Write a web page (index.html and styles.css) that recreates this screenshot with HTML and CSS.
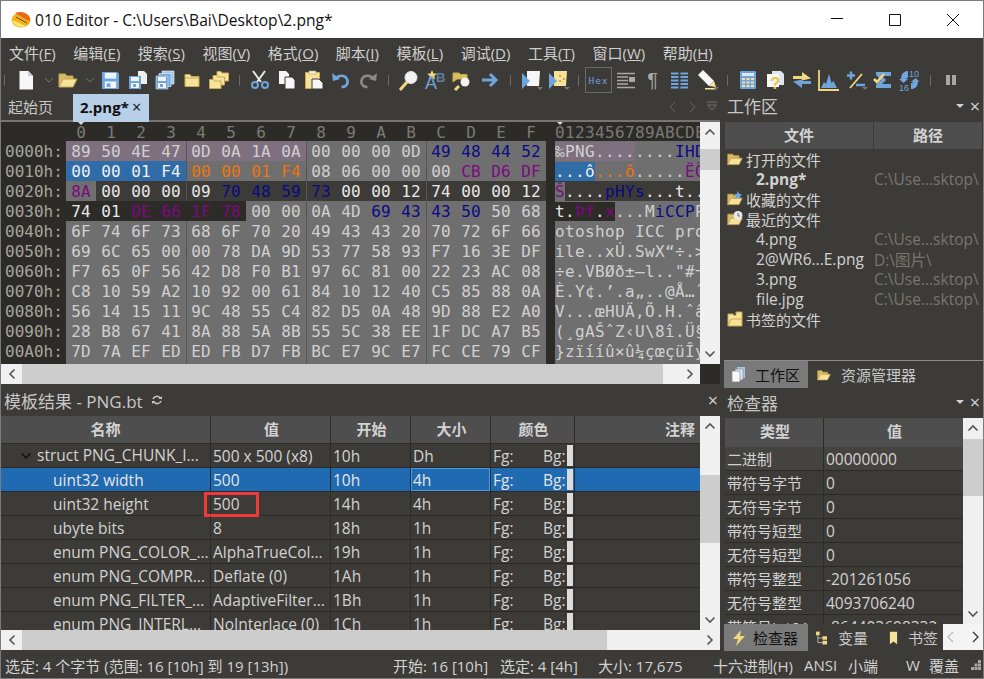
FILE: index.html
```html
<!DOCTYPE html>
<html lang="zh-CN">
<head>
    <meta charset="UTF-8">
    <meta name="viewport" content="width=device-width, initial-scale=1.0">
    <title>010 Editor</title>
    <link rel="stylesheet" href="styles.css">
</head>
<body>
<svg class="defs" width="0" height="0">
    <defs>
        <symbol id="folder-open" viewBox="0 0 20 20">
            <path d="M1 17V4h6l2 2h6v3H6z" fill="#d9bb63" stroke="#c8a850"/>
            <path d="M1 17l4-8h14l-4 8z" fill="#f7e29b" stroke="#c8a850"/>
        </symbol>
        <symbol id="floppy" viewBox="0 0 20 20">
            <path d="M1 1h16l2 2v16H1z" fill="#6fa5dc"/>
            <path d="M4 2h12v6H4z" fill="#eef4fb"/>
            <path d="M4 11h12v7H4z" fill="#f4f4f4"/>
            <path d="M6 13h4v4H6z" fill="#6fa5dc"/>
        </symbol>
    </defs>
</svg>
<div class="window">
    <div class="titlebar">
        <svg class="app-icon" width="20" height="18" viewBox="0 0 20 18">
            <ellipse cx="10" cy="9" rx="9.5" ry="7.5" fill="#f2b21e"/>
            <path d="M4 2c5-2 12-1 15 5 1 3-1 3-3 2z" fill="#e8691c"/>
            <path d="M1 9c3 1 9 4 14 6-4 2-12 1-14-6z" fill="#fbe46a"/>
            <path d="M5 6l11 6" stroke="#6b4a12" stroke-width="1"/>
        </svg>
        <span class="title-text">010 Editor - C:\Users\Bai\Desktop\2.png*</span>
        <div class="win-btns">
            <svg width="14" height="14" viewBox="0 0 14 14"><path d="M1 5.500h12" stroke="#111"/></svg>
            <svg width="14" height="14" viewBox="0 0 14 14"><path d="M1.500 1.500h11v11h-11z" fill="none" stroke="#111"/></svg>
            <svg width="14" height="14" viewBox="0 0 14 14"><path d="M1 1l12 12M13 1L1 13" stroke="#111"/></svg>
        </div>
    </div>

    <div class="menubar">
        <span>文件(<u>F</u>)</span>
        <span>编辑(<u>E</u>)</span>
        <span>搜索(<u>S</u>)</span>
        <span>视图(<u>V</u>)</span>
        <span>格式(<u>O</u>)</span>
        <span>脚本(<u>I</u>)</span>
        <span>模板(<u>L</u>)</span>
        <span>调试(<u>D</u>)</span>
        <span>工具(<u>T</u>)</span>
        <span>窗口(<u>W</u>)</span>
        <span>帮助(<u>H</u>)</span>
    </div>

    <div class="toolbar">
        <i class="tb-grip"></i>
        <span class="tb"><svg width="20" height="20" viewBox="0 0 20 20"><path d="M3.500 1h9l4.500 5v13.500h-13.500z" fill="#f7f7f7"/><path d="M12 1v5h5z" fill="#c5cfdb"/></svg></span>
        <span class="tb-chev"><svg width="10" height="6" viewBox="0 0 10 6"><path d="M1 1l4 4 4-4" fill="none" stroke="#77756f"/></svg></span>
        <span class="tb-folder"><svg width="20" height="20"><use href="#folder-open"/></svg></span>
        <span class="tb-chev chev-end"><svg width="10" height="6" viewBox="0 0 10 6"><path d="M1 1l4 4 4-4" fill="none" stroke="#77756f"/></svg></span>
        <span class="tb"><svg width="19" height="19"><use href="#floppy"/></svg></span>
        <span class="tb"><svg width="20" height="20" viewBox="0 0 20 20"><path d="M10 1h6l3 3v10h-9z" fill="#eee"/><path d="M1 6h12v13H1z" fill="#6fa5dc"/><path d="M3 7h8v4H3zM3 13h8v5H3z" fill="#f2f2f2"/><path d="M5 14h3v3H5z" fill="#6fa5dc"/></svg></span>
        <span class="tb"><svg width="20" height="20" viewBox="0 0 20 20"><path d="M7 1h12v13H7z" fill="#9cc3ea" stroke="#fff" stroke-width=".6"/><path d="M4 3.500h12v13H4z" fill="#6fa5dc" stroke="#fff" stroke-width=".6"/><path d="M1 6h12v13H1z" fill="#6fa5dc" stroke="#dbe8f5" stroke-width=".6"/><path d="M3 7h8v4H3zM3 13h8v5H3z" fill="#f2f2f2"/><path d="M5 14h3v3H5z" fill="#6fa5dc"/></svg></span>
        <span class="tb"><svg width="18" height="18" viewBox="0 0 18 18"><path d="M2 3.500h5l1.500 2h7.500v10H2z" fill="#f7e29b" stroke="#c8a850"/><path d="M2 7h14" stroke="#c8a850"/></svg></span>
        <span class="tb"><svg width="22" height="20" viewBox="0 0 22 20"><path d="M9 1.500h4l1 1.500h6.500v8H9z" fill="#f7e29b" stroke="#c8a850"/><path d="M5 5.500h4l1 1.500h6.500v8H5z" fill="#f7e29b" stroke="#c8a850"/><path d="M1.500 9.500h4l1 1.500h6.500v7.500H1.500z" fill="#f7e29b" stroke="#c8a850"/></svg></span>
        <i class="tb-sep"></i>
        <span class="tb"><svg width="20" height="20" viewBox="0 0 20 20"><path d="M3 1l8 11M15 1l-8 11" stroke="#e8e8e8" stroke-width="2"/><circle cx="5" cy="15" r="3" fill="none" stroke="#6fa5dc" stroke-width="2"/><circle cx="15" cy="15" r="3" fill="none" stroke="#6fa5dc" stroke-width="2"/></svg></span>
        <span class="tb"><svg width="20" height="20" viewBox="0 0 20 20"><path d="M2 1h7l3 3v10H2z" fill="#f7f7f7"/><path d="M8 7h7l3 3v9H8z" fill="#f7f7f7" stroke="#3d3b37"/></svg></span>
        <span class="tb"><svg width="20" height="20" viewBox="0 0 20 20"><path d="M1.500 2.500h14v16h-14z" fill="#f7e29b" stroke="#c8a850"/><path d="M5 1h7v3H5z" fill="#eee" stroke="#c8a850" stroke-width=".6"/><path d="M8 9h7l4 4v6H8z" fill="#f7f7f7" stroke="#3d3b37"/></svg></span>
        <span class="tb"><svg width="20" height="18" viewBox="0 0 20 18"><path d="M4.500 8c3-4.500 9.500-4 11.500 0 2 4.500-1 8-5.500 8" fill="none" stroke="#6fa5dc" stroke-width="2.600"/><path d="M1 2l1 8 7-2z" fill="#6fa5dc"/></svg></span>
        <span class="tb"><svg width="20" height="18" viewBox="0 0 20 18"><path d="M15.500 8c-3-4.500-9.500-4-11.500 0-2 4.500 1 8 5.500 8" fill="none" stroke="#8a8a86" stroke-width="2.600"/><path d="M19 2l-1 8-7-2z" fill="#8a8a86"/></svg></span>
        <i class="tb-sep"></i>
        <span class="tb"><svg width="21" height="21" viewBox="0 0 21 21"><path d="M9 12l-7 8" stroke="#f3d77c" stroke-width="3"/><circle cx="13" cy="7.500" r="6" fill="#f2f2f2" stroke="#e6e6e6"/></svg></span>
        <span class="tb"><svg width="22" height="20" viewBox="0 0 22 20"><path d="M7 0l1.500 3.500 3.500.300-2.700 2.300.8 3.400L7 7.700 4 9.500l.8-3.400L2.100 3.800l3.400-.3z" fill="#f3d77c"/><text x="0" y="19" class="ab-a">A</text><text x="11" y="12" class="ab-b">B</text></svg></span>
        <span class="tb"><svg width="21" height="21" viewBox="0 0 21 21"><path d="M1 12V3h6l1.500 1.500h6.500V9H5z" fill="#d9bb63" stroke="#c8a850"/><path d="M7 16l-4 4" stroke="#f3d77c" stroke-width="3"/><circle cx="13" cy="12" r="4.500" fill="#f2f2f2"/></svg></span>
        <span class="tb"><svg width="18" height="16" viewBox="0 0 18 16"><path d="M1 8h13M9 2l6 6-6 6" fill="none" stroke="#6fa5dc" stroke-width="3"/></svg></span>
        <i class="tb-sep"></i>
        <span class="tb tb-more"><svg width="20" height="20" viewBox="0 0 20 20"><path d="M6 1h13l-1 15H6z" fill="#f5f5f5"/><path d="M1 3l8 8-8 8z" fill="#6fa5dc"/></svg></span>
        <span class="tb tb-more"><svg width="20" height="20" viewBox="0 0 20 20"><path d="M6 1h13l-1 15H6z" fill="#f7e29b"/><path d="M11 5h2v2h-2zM15 8h2v2h-2zM11 10h2v2h-2z" fill="#c8a850"/><path d="M1 3l8 8-8 8z" fill="#6fa5dc"/></svg></span>
        <i class="tb-sep"></i>
        <span class="tb-hex">Hex</span>
        <span class="tb"><svg width="20" height="18" viewBox="0 0 20 18"><path d="M1 2.500h18M1 6h11M1 9.500h11M1 13h11M1 16.500h18" stroke="#a8a8a4" stroke-width="1.400"/><path d="M13 6h6v5h-6z" fill="#a8a8a4"/></svg></span>
        <span class="tb tb-pil">¶</span>
        <span class="tb"><svg width="17" height="17" viewBox="0 0 17 17"><path d="M0 1.500h7.500M9.500 1.500h7.500M0 5h7.500M9.500 5h7.500M0 8.500h7.500M9.500 8.500h7.500M0 12h7.500M9.500 12h7.500M0 15.500h7.500M9.500 15.500h7.500" stroke="#6fa5dc" stroke-width="2"/></svg></span>
        <span class="tb tb-more"><svg width="20" height="20" viewBox="0 0 20 20"><path d="M1 5l5-5 11 11-5 5z" fill="#f7f7f7"/><path d="M12 16l5-5 2 6z" fill="#f7e29b"/><path d="M8 18h11v1.500H8z" fill="#f7e29b"/></svg></span>
        <i class="tb-sep"></i>
        <span class="tb"><svg width="16" height="18" viewBox="0 0 16 18"><path d="M0 1l1-1h14l1 1v16l-1 1H1l-1-1z" fill="#6fa5dc"/><path d="M2 2h12v3H2z" fill="#dbe8f5"/><path d="M2 7h3v2H2zM6.500 7h3v2h-3zM11 7h3v2h-3zM2 10.500h3v2H2zM6.500 10.500h3v2h-3zM11 10.500h3v2h-3zM2 14h3v2H2zM6.500 14h3v2h-3zM11 14h3v2h-3z" fill="#f7e29b"/></svg></span>
        <span class="tb"><svg width="18" height="20" viewBox="0 0 18 20"><path d="M6 1h9l3 3v11H6z" fill="#dfe6ee"/><path d="M1 4h12v13H1z" fill="#f7f7f7"/><text x="4" y="19" class="help-q">?</text></svg></span>
        <span class="tb"><svg width="20" height="18" viewBox="0 0 20 18"><path d="M1 5h9V1l9 6.500-9 2V8H1z" fill="#f3d77c"/><path d="M19 13h-9v4l-9-6.500 9-2V10h9z" fill="#6fa5dc"/></svg></span>
        <span class="tb"><svg width="21" height="21" viewBox="0 0 21 21"><path d="M1 0v20h20" fill="none" stroke="#f3d77c" stroke-width="1.800"/><path d="M3 18l3-6 2 2 3-10 2.500 9 2-2 3.500 7z" fill="#6fa5dc"/></svg></span>
        <span class="tb tb-more"><svg width="18" height="18" viewBox="0 0 18 18"><path d="M0 4.500h8M4 .5v8M9 14h9" stroke="#6fa5dc" stroke-width="2.400"/><path d="M3 17L15 3" stroke="#f3d77c" stroke-width="1.800"/></svg></span>
        <span class="tb"><svg width="19" height="18" viewBox="0 0 19 18"><path d="M3 1h15v4h-9l4 4-4 4h9v4H3v-3l5-5-5-5z" fill="#6fa5dc"/><path d="M1 8l3 3 7-8" fill="none" stroke="#f3d77c" stroke-width="2.600"/></svg></span>
        <span class="tb tb-base">
            <svg width="21" height="21" viewBox="0 0 21 21"><path d="M2 9c0-6 4-8 7-8v7c-1 0-2 0-2 1h2l-4.500 4L0 9z" fill="#6fa5dc"/><path d="M19 11c0 6-3 8-7 8v-6c1 0 2 0 2-1h-2l4.500-4 4.500 4z" fill="#6fa5dc"/><text x="10" y="7" class="base-n">10</text><text x="0" y="21" class="base-n">16</text></svg>
        </span>
        <i class="tb-sep"></i>
        <span class="tb"><svg width="10" height="10" viewBox="0 0 10 10"><path d="M0 0h4v10H0zM6 0h4v10H6z" fill="#a8a8a4"/></svg></span>
    </div>

    <div class="main">
        <div class="left">
            <div class="tabs">
                <span class="tab">起始页</span>
                <span class="tab active"><b>2.png*</b><em>×</em></span>
                <div class="tab-nav">
                    <svg width="10" height="12" viewBox="0 0 10 12"><path d="M7 1L2 6l5 5" fill="none" stroke="#66645f"/></svg>
                    <svg width="10" height="12" viewBox="0 0 10 12"><path d="M3 1l5 5-5 5" fill="none" stroke="#66645f"/></svg>
                    <svg width="12" height="12" viewBox="0 0 12 12"><path d="M1 1h10M1.500 4l4.500 5 4.500-5z" fill="none" stroke="#77756f"/></svg>
                </div>
            </div>

            <div class="hex-pane">
                <div class="hex-view">
                    <div class="hex-row head">
                        <span class="addr"></span>
                        <span>0</span><span>1</span><span>2</span><span>3</span><span>4</span><span>5</span><span>6</span><span>7</span><span>8</span><span>9</span><span>A</span><span>B</span><span>C</span><span>D</span><span>E</span><span>F</span>
                        <span class="gutter"></span>
                        <span class="ascii">0123456789ABCDEF</span>
                        <i class="caret c1"></i><i class="caret c2"></i>
                    </div>
                    <div class="hex-row">
                        <span class="addr">0000h:</span>
                        <span class="pu">89</span><span class="pu">50</span><span class="pu">4E</span><span class="pu">47</span><span class="pu sep">0D</span><span class="pu">0A</span><span class="pu">1A</span><span class="pu">0A</span><span class="gr sep">00</span><span class="gr">00</span><span class="gr">00</span><span class="gr">0D</span><span class="gr sep navy">49</span><span class="gr navy">48</span><span class="gr navy">44</span><span class="gr navy">52</span>
                        <span class="gutter"></span>
                        <span class="ascii"><span class="pu">‰PNG....</span>....<span class="navy">IHDR</span></span>
                    </div>
                    <div class="hex-row">
                        <span class="addr">0010h:</span>
                        <span class="bl">00</span><span class="bl">00</span><span class="bl">01</span><span class="bl">F4</span><span class="gr sep or">00</span><span class="gr or">00</span><span class="gr or">01</span><span class="gr or">F4</span><span class="gr sep">08</span><span class="gr">06</span><span class="gr">00</span><span class="gr">00</span><span class="gr sep">00</span><span class="gr vio">CB</span><span class="gr vio">D6</span><span class="gr vio">DF</span>
                        <span class="gutter"></span>
                        <span class="ascii"><span class="bl">...ô</span><span class="or">...ô</span>.....<span class="vio">ËÖß</span></span>
                    </div>
                    <div class="hex-row">
                        <span class="addr">0020h:</span>
                        <span class="gr vio">8A</span><span class="dk">00</span><span class="dk">00</span><span class="dk">00</span><span class="dk sep">09</span><span class="dk navy">70</span><span class="dk navy">48</span><span class="dk navy">59</span><span class="dk sep navy">73</span><span class="dk">00</span><span class="dk">00</span><span class="dk">12</span><span class="dk sep">74</span><span class="dk">00</span><span class="dk">00</span><span class="dk">12</span>
                        <span class="gutter"></span>
                        <span class="ascii dk"><span class="gr vio">Š</span>....<span class="navy">pHYs</span>...t...</span>
                    </div>
                    <div class="hex-row">
                        <span class="addr">0030h:</span>
                        <span class="bk">74</span><span class="bk">01</span><span class="bk vio">DE</span><span class="bk vio">66</span><span class="bk vio">1F</span><span class="bk vio">78</span><span class="gr">00</span><span class="gr">00</span><span class="gr sep">0A</span><span class="gr">4D</span><span class="gr navy">69</span><span class="gr navy">43</span><span class="gr sep navy">43</span><span class="gr navy">50</span><span class="gr">50</span><span class="gr">68</span>
                        <span class="gutter"></span>
                        <span class="ascii"><span class="bk">t.<span class="vio">Þf</span>.<span class="vio">x</span></span>...M<span class="navy">iCCP</span>Ph</span>
                    </div>
                    <div class="hex-row">
                        <span class="addr">0040h:</span>
                        <span class="gr">6F</span><span class="gr">74</span><span class="gr">6F</span><span class="gr">73</span><span class="gr sep">68</span><span class="gr">6F</span><span class="gr">70</span><span class="gr">20</span><span class="gr sep">49</span><span class="gr">43</span><span class="gr">43</span><span class="gr">20</span><span class="gr sep">70</span><span class="gr">72</span><span class="gr">6F</span><span class="gr">66</span>
                        <span class="gutter"></span>
                        <span class="ascii">otoshop ICC prof</span>
                    </div>
                    <div class="hex-row">
                        <span class="addr">0050h:</span>
                        <span class="gr">69</span><span class="gr">6C</span><span class="gr">65</span><span class="gr">00</span><span class="gr sep">00</span><span class="gr">78</span><span class="gr">DA</span><span class="gr">9D</span><span class="gr sep">53</span><span class="gr">77</span><span class="gr">58</span><span class="gr">93</span><span class="gr sep">F7</span><span class="gr">16</span><span class="gr">3E</span><span class="gr">DF</span>
                        <span class="gutter"></span>
                        <span class="ascii">ile..xÚ.SwX“÷.&gt;ß</span>
                    </div>
                    <div class="hex-row">
                        <span class="addr">0060h:</span>
                        <span class="gr">F7</span><span class="gr">65</span><span class="gr">0F</span><span class="gr">56</span><span class="gr sep">42</span><span class="gr">D8</span><span class="gr">F0</span><span class="gr">B1</span><span class="gr sep">97</span><span class="gr">6C</span><span class="gr">81</span><span class="gr">00</span><span class="gr sep">22</span><span class="gr">23</span><span class="gr">AC</span><span class="gr">08</span>
                        <span class="gutter"></span>
                        <span class="ascii">÷e.VBØð±—l.."#¬.</span>
                    </div>
                    <div class="hex-row">
                        <span class="addr">0070h:</span>
                        <span class="gr">C8</span><span class="gr">10</span><span class="gr">59</span><span class="gr">A2</span><span class="gr sep">10</span><span class="gr">92</span><span class="gr">00</span><span class="gr">61</span><span class="gr sep">84</span><span class="gr">10</span><span class="gr">12</span><span class="gr">40</span><span class="gr sep">C5</span><span class="gr">85</span><span class="gr">88</span><span class="gr">0A</span>
                        <span class="gutter"></span>
                        <span class="ascii">È.Y¢.’.a„..@Å…ˆ.</span>
                    </div>
                    <div class="hex-row">
                        <span class="addr">0080h:</span>
                        <span class="gr">56</span><span class="gr">14</span><span class="gr">15</span><span class="gr">11</span><span class="gr sep">9C</span><span class="gr">48</span><span class="gr">55</span><span class="gr">C4</span><span class="gr sep">82</span><span class="gr">D5</span><span class="gr">0A</span><span class="gr">48</span><span class="gr sep">9D</span><span class="gr">88</span><span class="gr">E2</span><span class="gr">A0</span>
                        <span class="gutter"></span>
                        <span class="ascii">V...œHUÄ‚Õ.H.ˆâ.</span>
                    </div>
                    <div class="hex-row">
                        <span class="addr">0090h:</span>
                        <span class="gr">28</span><span class="gr">B8</span><span class="gr">67</span><span class="gr">41</span><span class="gr sep">8A</span><span class="gr">88</span><span class="gr">5A</span><span class="gr">8B</span><span class="gr sep">55</span><span class="gr">5C</span><span class="gr">38</span><span class="gr">EE</span><span class="gr sep">1F</span><span class="gr">DC</span><span class="gr">A7</span><span class="gr">B5</span>
                        <span class="gutter"></span>
                        <span class="ascii">(¸gAŠˆZ‹U\8î.Ü§µ</span>
                    </div>
                    <div class="hex-row">
                        <span class="addr">00A0h:</span>
                        <span class="gr">7D</span><span class="gr">7A</span><span class="gr">EF</span><span class="gr">ED</span><span class="gr sep">ED</span><span class="gr">FB</span><span class="gr">D7</span><span class="gr">FB</span><span class="gr sep">BC</span><span class="gr">E7</span><span class="gr">9C</span><span class="gr">E7</span><span class="gr sep">FC</span><span class="gr">CE</span><span class="gr">79</span><span class="gr">CF</span>
                        <span class="gutter"></span>
                        <span class="ascii">}zïííû×û¼çœçüÎyÏ</span>
                    </div>
                </div>
                <div class="vscroll hex-v">
                    <span class="arrow"><svg width="12" height="8" viewBox="0 0 12 8"><path d="M1.500 6.500L6 2l4.500 4.500" fill="none" stroke="#555" stroke-width="1.600"/></svg></span>
                    <span class="thumb"></span>
                    <span class="track"></span>
                    <span class="arrow"><svg width="12" height="8" viewBox="0 0 12 8"><path d="M1.500 1.500L6 6l4.500-4.500" fill="none" stroke="#555" stroke-width="1.600"/></svg></span>
                </div>
            </div>

            <div class="hscroll">
                <span class="arrow"><svg width="8" height="12" viewBox="0 0 8 12"><path d="M6.500 1.500L2 6l4.500 4.500" fill="none" stroke="#555" stroke-width="1.600"/></svg></span>
                <span class="thumb hex-h"></span>
                <span class="track"></span>
                <span class="arrow"><svg width="8" height="12" viewBox="0 0 8 12"><path d="M1.500 1.500L6 6l-4.500 4.500" fill="none" stroke="#555" stroke-width="1.600"/></svg></span>
                <span class="corner"></span>
            </div>

            <div class="pane-head tmpl-head">
                <span>模板结果 - PNG.bt</span>
                <svg class="refresh" width="12" height="12" viewBox="0 0 12 12"><path d="M2 5a4 4 0 0 1 7-1M10 7a4 4 0 0 1-7 1" fill="none" stroke="#c8c8c8" stroke-width="1.500"/><path d="M7.500 5H11V2zM4.500 7H1v3z" fill="#c8c8c8"/></svg>
                <em class="close">×</em>
            </div>

            <div class="tmpl-pane">
                <div class="tmpl-table">
                    <div class="trow thead"><span class="c-name">名称</span><span class="c-val">值</span><span class="c-start">开始</span><span class="c-size">大小</span><span class="c-color">颜色</span><span class="c-note">注释</span></div>
                    <div class="trow">
                        <span class="c-name lvl1"><svg width="10" height="6" viewBox="0 0 10 6"><path d="M0.500 0.500L5 5l4.500-4.500" fill="none" stroke="#111" stroke-width="1.500"/></svg>struct PNG_CHUNK_I...</span>
                        <span class="c-val">500 x 500 (x8)</span><span class="c-start">10h</span><span class="c-size">Dh</span>
                        <span class="c-color"><span>Fg:</span><span>Bg:</span><i></i></span><span class="c-note"></span>
                    </div>
                    <div class="trow picked">
                        <span class="c-name">uint32 width</span><span class="c-val">500</span><span class="c-start">10h</span><span class="c-size focus">4h</span>
                        <span class="c-color"><span>Fg:</span><span>Bg:</span><i></i></span><span class="c-note"></span>
                    </div>
                    <div class="trow">
                        <span class="c-name">uint32 height</span>
                        <span class="c-val">500<i class="red-box"></i></span>
                        <span class="c-start">14h</span><span class="c-size">4h</span>
                        <span class="c-color"><span>Fg:</span><span>Bg:</span><i></i></span><span class="c-note"></span>
                    </div>
                    <div class="trow">
                        <span class="c-name">ubyte bits</span><span class="c-val">8</span><span class="c-start">18h</span><span class="c-size">1h</span>
                        <span class="c-color"><span>Fg:</span><span>Bg:</span><i></i></span><span class="c-note"></span>
                    </div>
                    <div class="trow">
                        <span class="c-name">enum PNG_COLOR_...</span><span class="c-val">AlphaTrueCol...</span><span class="c-start">19h</span><span class="c-size">1h</span>
                        <span class="c-color"><span>Fg:</span><span>Bg:</span><i></i></span><span class="c-note"></span>
                    </div>
                    <div class="trow">
                        <span class="c-name">enum PNG_COMPR...</span><span class="c-val">Deflate (0)</span><span class="c-start">1Ah</span><span class="c-size">1h</span>
                        <span class="c-color"><span>Fg:</span><span>Bg:</span><i></i></span><span class="c-note"></span>
                    </div>
                    <div class="trow">
                        <span class="c-name">enum PNG_FILTER_...</span><span class="c-val">AdaptiveFilter...</span><span class="c-start">1Bh</span><span class="c-size">1h</span>
                        <span class="c-color"><span>Fg:</span><span>Bg:</span><i></i></span><span class="c-note"></span>
                    </div>
                    <div class="trow">
                        <span class="c-name">enum PNG_INTERL...</span><span class="c-val">NoInterlace (0)</span><span class="c-start">1Ch</span><span class="c-size">1h</span>
                        <span class="c-color"><span>Fg:</span><span>Bg:</span><i></i></span><span class="c-note"></span>
                    </div>
                </div>
                <div class="vscroll tmpl-v">
                    <span class="arrow"><svg width="12" height="8" viewBox="0 0 12 8"><path d="M1.500 6.500L6 2l4.500 4.500" fill="none" stroke="#555" stroke-width="1.600"/></svg></span>
                    <span class="track gap"></span>
                    <span class="thumb"></span>
                    <span class="track"></span>
                    <span class="arrow"><svg width="12" height="8" viewBox="0 0 12 8"><path d="M1.500 1.500L6 6l4.500-4.500" fill="none" stroke="#555" stroke-width="1.600"/></svg></span>
                </div>
            </div>

            <div class="hscroll tmpl-h">
                <span class="arrow"><svg width="8" height="12" viewBox="0 0 8 12"><path d="M6.500 1.500L2 6l4.500 4.500" fill="none" stroke="#555" stroke-width="1.600"/></svg></span>
                <span class="thumb"></span>
                <span class="track"></span>
                <span class="arrow"><svg width="8" height="12" viewBox="0 0 8 12"><path d="M1.500 1.500L6 6l-4.500 4.500" fill="none" stroke="#555" stroke-width="1.600"/></svg></span>
            </div>
        </div>

        <div class="side">
            <div class="pane-head work-head">
                <span>工作区</span>
                <i class="drop"></i>
                <em class="close">×</em>
            </div>
            <div class="work-pane">
                <div class="fhead"><span>文件</span><span>路径</span></div>
                <div class="frow group"><svg width="16" height="16"><use href="#folder-open"/></svg><span>打开的文件</span></div>
                <div class="frow"><b>2.png*</b><span class="path">C:\Use...sktop\</span></div>
                <div class="frow group"><svg width="16" height="16" viewBox="0 0 16 16"><use href="#folder-open" width="16" height="16"/><path d="M11 0l1.300 3 3 .2-2.300 2 .8 3-2.800-1.600L8.200 8.200l.8-3-2.300-2 3-.2z" fill="#6fa5dc"/></svg><span>收藏的文件</span></div>
                <div class="frow group"><svg width="16" height="16" viewBox="0 0 16 16"><use href="#folder-open" width="16" height="16"/><circle cx="11" cy="4.500" r="4.500" fill="#e8e8e8"/><path d="M11 2v3h2" fill="none" stroke="#6a6a6a"/></svg><span>最近的文件</span></div>
                <div class="frow"><span class="fname">4.png</span><span class="path">C:\Use...sktop\</span></div>
                <div class="frow"><span class="fname">2@WR6...E.png</span><span class="path">D:\图片\</span></div>
                <div class="frow"><span class="fname">3.png</span><span class="path">C:\Use...sktop\</span></div>
                <div class="frow"><span class="fname">file.jpg</span><span class="path">C:\Use...sktop\</span></div>
                <div class="frow group"><svg width="16" height="16" viewBox="0 0 16 16"><path d="M1 15V3h5l1 1.500h2V1h6v14z" fill="#f7e29b" stroke="#c8a850"/><path d="M1 15l3-7h11" fill="none" stroke="#c8a850"/></svg><span>书签的文件</span></div>
            </div>
            <div class="ptabs">
                <span class="ptab on">
                    <svg width="14" height="15" viewBox="0 0 14 15"><path d="M5 0h8v11H5z" fill="#a9c8e8"/><path d="M3 2h8v11H3z" fill="#dbe8f5" stroke="#7a7a7a" stroke-width=".6"/><path d="M0 4h8v11H0z" fill="#f7f7f7" stroke="#7a7a7a" stroke-width=".6"/></svg>工作区
                </span>
                <span class="ptab"><svg width="16" height="14"><use href="#folder-open" width="16" height="14"/></svg>资源管理器</span>
            </div>

            <div class="pane-head insp-head">
                <span>检查器</span>
                <i class="drop"></i>
                <em class="close">×</em>
            </div>
            <div class="insp-pane">
                <div class="insp-table">
                    <div class="irow ihead"><span>类型</span><span>值</span></div>
                    <div class="irow first"><span>二进制</span><span class="num">00000000</span></div>
                    <div class="irow"><span>带符号字节</span><span class="num">0</span></div>
                    <div class="irow"><span>无符号字节</span><span class="num">0</span></div>
                    <div class="irow"><span>带符号短型</span><span class="num">0</span></div>
                    <div class="irow"><span>无符号短型</span><span class="num">0</span></div>
                    <div class="irow"><span>带符号整型</span><span class="num">-201261056</span></div>
                    <div class="irow"><span>无符号整型</span><span class="num">4093706240</span></div>
                    <div class="irow"><span>带符号Int64</span><span class="num">-864403698332</span></div>
                </div>
                <div class="vscroll insp-v">
                    <span class="arrow"><svg width="12" height="8" viewBox="0 0 12 8"><path d="M1.500 6.500L6 2l4.500 4.500" fill="none" stroke="#555" stroke-width="1.600"/></svg></span>
                    <span class="thumb"></span>
                    <span class="track"></span>
                    <span class="arrow"><svg width="12" height="8" viewBox="0 0 12 8"><path d="M1.500 1.500L6 6l4.500-4.500" fill="none" stroke="#555" stroke-width="1.600"/></svg></span>
                </div>
            </div>
            <div class="ptabs insp-tabs">
                <span class="ptab on">
                    <svg width="14" height="16" viewBox="0 0 14 16"><path d="M9 0L1 9h5l-2 7 9-10H8z" fill="#f3d77c"/></svg>检查器
                </span>
                <span class="ptab"><svg width="11" height="14" viewBox="0 0 12 14"><path d="M0 0h4v4H0z" fill="#f3d77c"/><path d="M7 5h5v4H7zM7 10h5v4H7z" fill="#f3d77c"/><path d="M2 4v8h5M2 7h5" fill="none" stroke="#bbb"/></svg>变量</span>
                <span class="ptab"><svg width="9" height="14" viewBox="0 0 10 14"><path d="M1 0h8v14L5 11l-4 3z" fill="#f7e29b"/></svg>书签</span>
                <span class="pnav">
                    <svg width="10" height="12" viewBox="0 0 10 12"><path d="M7 1L2 6l5 5" fill="none" stroke="#bbb" stroke-width="1.300"/></svg>
                    <svg width="10" height="12" viewBox="0 0 10 12"><path d="M3 1l5 5-5 5" fill="none" stroke="#333" stroke-width="1.300"/></svg>
                </span>
            </div>
        </div>
    </div>

    <div class="statusbar">
        <span class="s-sel">选定: 4 个字节 (范围: 16 [10h] 到 19 [13h])</span>
        <span class="s-start">开始: 16 [10h]</span>
        <span class="s-len">选定: 4 [4h]</span>
        <span class="s-size">大小: 17,675</span>
        <span class="s-enc">十六进制(H)</span>
        <span class="s-ansi">ANSI</span>
        <span class="s-end">小端</span>
        <span class="s-w">W</span>
        <span class="s-ovr">覆盖</span>
        <svg class="grip" width="10" height="10" viewBox="0 0 10 10"><path d="M7 0h3v3H7zM3.500 3.500h3v3h-3zM7 3.500h3v3H7zM0 7h3v3H0zM3.500 7h3v3h-3zM7 7h3v3H7z" fill="#a8a8a4"/></svg>
    </div>
</div>
</body>
</html>
```

FILE: styles.css
```css
* {
    box-sizing: border-box;
}
body {
    margin: 0;
    background: #3d3b37;
    font-family: "Open Sans", "Noto Sans CJK SC", sans-serif;
    font-size: 15px;
    color: #d2d2d2;
}
.defs {
    position: absolute;
}
em {
    font-style: normal;
}
.window {
    width: 984px;
    height: 679px;
    display: flex;
    flex-direction: column;
    border: 1px solid #7b7b7b;
    background: #3d3b37;
    overflow: hidden;
}

/* title bar */
.titlebar {
    flex: none;
    height: 37px;
    display: flex;
    align-items: center;
    padding-left: 10px;
    background: #fff;
    color: #111;
}
.title-text {
    margin-left: 4px;
    font-size: 15.6px;
    white-space: nowrap;
}
.win-btns {
    margin-left: auto;
    display: flex;
    gap: 44px;
    padding-right: 23px;
}

/* menu */
.menubar {
    flex: none;
    height: 28px;
    display: flex;
    align-items: center;
    gap: 17.5px;
    padding-left: 8px;
    color: #cfcfcf;
    font-size: 15px;
}

/* toolbar */
.toolbar {
    flex: none;
    height: 28px;
    display: flex;
    align-items: center;
    padding-left: 3px;
}
.tb-grip {
    width: 1px;
    height: 11px;
    margin-right: 7px;
    background: #6b6964;
}
.tb {
    flex: none;
    width: 27px;
    height: 28px;
    display: flex;
    align-items: center;
    justify-content: center;
    position: relative;
}
.tb-chev {
    flex: none;
    width: 19px;
    display: flex;
    justify-content: center;
}
.tb-chev.chev-end {
    justify-content: flex-end;
    padding-right: 2px;
}
.tb-folder {
    flex: none;
    width: 20px;
    height: 20px;
}
.tb-sep {
    flex: none;
    width: 14px;
    height: 11px;
    background: linear-gradient(#6b6964, #6b6964) center / 1px 100% no-repeat;
}
.tb-more::after {
    content: "";
    position: absolute;
    right: 1px;
    bottom: 1px;
    border: 3px solid transparent;
    border-top-color: #77756f;
}
.tb-hex {
    flex: none;
    width: 27px;
    height: 26px;
    display: flex;
    align-items: center;
    justify-content: center;
    border: 1px solid #6a6a66;
    font-family: "DejaVu Sans Mono", monospace;
    font-size: 9.5px;
    letter-spacing: 1px;
    color: #6fa5dc;
}
.tb-pil {
    font-family: "Liberation Sans", sans-serif;
    font-size: 20px;
    color: #a8a8a4;
}
.ab-a {
    font: 18px "Liberation Sans", sans-serif;
    fill: #6fa5dc;
}
.ab-b {
    font: bold 13px "Liberation Sans", sans-serif;
    fill: #5d7da0;
}
.help-q {
    font: bold 17px "Liberation Sans", sans-serif;
    fill: #e8c44e;
}
.base-n {
    font: 9px "Liberation Sans", sans-serif;
    fill: #6fa5dc;
}

/* main split */
.main {
    flex: none;
    height: 558px;
    display: flex;
}
.left {
    flex: none;
    width: 719px;
    display: flex;
    flex-direction: column;
}
.side {
    flex: none;
    width: 263px;
    padding-left: 4px;
    display: flex;
    flex-direction: column;
}

/* document tabs */
.tabs {
    flex: none;
    height: 28px;
    display: flex;
    border-bottom: 2px solid #757575;
}
.tab {
    height: 26px;
    padding: 0 7px;
    line-height: 26px;
    color: #c8c8c8;
}
.tab.active {
    margin-left: 13px;
    width: 76px;
    height: 28px;
    background: #b8cfe8;
    color: #111;
}
.tab.active b {
    font-size: 15px;
}
.tab.active em {
    margin-left: 3px;
    font-size: 16px;
}
.tab-nav {
    margin-left: auto;
    height: 26px;
    display: flex;
    align-items: center;
    gap: 9px;
    padding-right: 2px;
}

/* hex view */
.hex-pane {
    flex: none;
    height: 242px;
    display: flex;
}
.hex-view {
    width: 699px;
    overflow: hidden;
    font-family: "DejaVu Sans Mono", monospace;
    font-size: 16px;
    background: #6f6f6f;
}
.hex-row {
    position: relative;
    height: 20px;
    display: flex;
    line-height: 22px;
    color: #d0d0d0;
}
.hex-row:last-child {
    height: 23px;
}
.hex-row.head {
    height: 19px;
    line-height: 21px;
    background: #2d2b27;
    color: #7c7a74;
}
.hex-row > span {
    flex: none;
    width: 30px;
    text-align: center;
}
.hex-row > .addr {
    width: 65px;
    padding-left: 4px;
    text-align: left;
    background: #2d2b27;
    color: #a6a49e;
}
.hex-row > .gutter {
    width: 9px;
    background: #2d2b27;
}
.hex-row > .ascii {
    width: 145px;
    text-align: left;
    letter-spacing: 0.37px;
    white-space: pre;
    overflow: hidden;
    background: #6f6f6f;
}
.head > .ascii {
    background: #2d2b27;
}
.caret {
    position: absolute;
    top: 0;
    border: 3px solid transparent;
    border-top-color: #d8d8d8;
}
.c1 {
    left: 77px;
}
.c2 {
    left: 556px;
}
.pu {
    background: #7e707e;
}
.gr {
    background: #6f6f6f;
}
.bl {
    background: #2f6ca8;
    color: #f0f0f0;
}
.hex-row > .dk {
    background: #3d3b37;
    color: #e8e8e8;
}
.bk {
    background: #2d2b27;
    color: #e8e8e8;
}
.sep {
    box-shadow: inset 1px 0 #555;
}
.hex-row .navy,
.navy {
    color: #0a0a85;
}
.hex-row .vio,
.vio {
    color: #7b0a80;
}
.hex-row .or,
.or {
    color: #ee7410;
}

/* scrollbars */
.vscroll {
    flex: none;
    width: 20px;
    display: flex;
    flex-direction: column;
    background: #f0f0f0;
}
.vscroll .arrow {
    flex: none;
    height: 20px;
    display: flex;
    align-items: center;
    justify-content: center;
}
.vscroll .track {
    flex: 1;
}
.thumb {
    display: block;
    background: #cdcdcd;
}
.hex-v .thumb {
    margin-top: 7px;
    height: 21px;
}
.tmpl-v .gap {
    flex: none;
    height: 39px;
}
.tmpl-v .thumb {
    height: 68px;
}
.insp-v .thumb {
    margin-top: 1px;
    height: 57px;
}
.hscroll {
    flex: none;
    height: 20px;
    display: flex;
    background: #f0f0f0;
}
.hscroll .arrow {
    flex: none;
    width: 21px;
    display: flex;
    align-items: center;
    justify-content: center;
}
.hscroll .track {
    flex: 1;
}
.hscroll .thumb {
    width: 585px;
}
.hscroll .hex-h {
    width: 641px;
}
.corner {
    flex: none;
    width: 20px;
    background: #2d2b27;
}

/* panel headings */
.pane-head {
    flex: none;
    display: flex;
    align-items: center;
    padding-left: 3px;
    font-size: 17px;
    color: #c8c8c8;
}
.tmpl-head {
    height: 32px;
}
.work-head {
    height: 28px;
    padding-bottom: 5px;
}
.insp-head {
    height: 30px;
    padding-bottom: 2px;
}
.refresh {
    margin-left: 8px;
}
.close {
    margin-left: auto;
    padding-right: 2px;
    font-size: 18px;
    color: #d2d2d2;
}
.drop {
    margin-left: auto;
    border: 4px solid transparent;
    border-top-color: #d2d2d2;
    margin-top: 4px;
}
.drop + .close {
    margin-left: 6px;
    padding-right: 3px;
}

/* template results */
.tmpl-pane {
    flex: none;
    height: 214px;
    display: flex;
}
.tmpl-table {
    width: 699px;
    overflow: hidden;
}
.trow {
    height: 24px;
    display: flex;
    font-size: 15.5px;
    line-height: 25px;
    border-bottom: 1px solid #2d2b27;
}
.trow > span {
    flex: none;
    padding-left: 2px;
    border-right: 1px solid #2d2b27;
    white-space: nowrap;
    position: relative;
}
.trow.thead {
    height: 28px;
    background: #4e4e4e;
    font-size: 15px;
    font-weight: bold;
    line-height: 26px;
    color: #d2d2d2;
}
.thead > span {
    text-align: center;
}
.thead > .c-note {
    padding-right: 5px;
    text-align: right;
}
.c-name {
    width: 210px;
    padding-left: 52px !important;
}
.thead > .c-name {
    padding-left: 0 !important;
}
.lvl1 {
    padding-left: 20px !important;
    display: flex;
    align-items: center;
    gap: 6px;
}
.c-val {
    width: 120px;
}
.c-start {
    width: 80px;
}
.c-size {
    width: 80px;
}
.c-color {
    width: 84px;
    display: flex;
}
.thead > .c-color {
    display: block;
}
.c-color > span {
    width: 50px;
    flex: none;
}
.c-color > span + span {
    width: 24px;
}
.c-color i {
    flex: none;
    width: 6px;
    height: 21px;
    margin-top: 1px;
    background: #dcdcdc;
}
.c-note {
    width: 125px;
    border-right: 0 !important;
}
.picked {
    background: #1f6ab0;
    color: #e6e6e6;
}
.focus {
    box-shadow: inset 0 0 0 1px #4a9be0;
}
.red-box {
    position: absolute;
    left: -7px;
    top: 0;
    width: 55px;
    height: 25px;
    border: 3px solid #f03a3a;
}

/* workspace */
.work-pane {
    flex: none;
    height: 238px;
    padding-right: 1px;
}
.fhead {
    height: 27px;
    display: flex;
    margin-left: 1px;
    background: #4e4e4e;
    font-weight: bold;
    line-height: 26px;
    text-align: center;
}
.fhead span {
    flex: none;
    width: 108px;
}
.fhead span:first-child {
    width: 149px;
    border-right: 1px solid #3d3b37;
}
.frow {
    height: 20px;
    display: flex;
    align-items: center;
    padding-left: 32px;
    white-space: nowrap;
}
.frow.group {
    padding-left: 3px;
    gap: 3px;
}
.frow.group svg {
    flex: none;
}
.frow b,
.fname {
    flex: none;
    width: 118px;
    font-size: 15.5px;
}
.path {
    color: #777570;
    font-size: 15.5px;
}
.ptabs {
    flex: none;
    height: 28px;
    display: flex;
    border-top: 1px solid #8a8a8a;
}
.ptab {
    flex: none;
    display: flex;
    align-items: center;
    gap: 9px;
    padding-left: 8px;
    width: 84px;
    height: 27px;
    white-space: nowrap;
    color: #c8c8c8;
}
.ptab.on {
    background: #7a7a7a;
    color: #111;
}
.ptab:not(.on) {
    width: auto;
    padding-left: 8px;
}

/* inspector */
.insp-pane {
    flex: none;
    height: 206px;
    display: flex;
    padding-left: 1px;
}
.insp-table {
    width: 238px;
    overflow: hidden;
}
.irow {
    height: 24px;
    display: flex;
    line-height: 25px;
    border-bottom: 1px solid #2d2b27;
    white-space: nowrap;
}
.irow span {
    flex: none;
    width: 99px;
    padding-left: 2px;
    border-right: 1px solid #2d2b27;
}
.irow span + span {
    width: 139px;
    border-right: 0;
}
.irow .num {
    font-size: 15.5px;
}
.irow.ihead {
    height: 29px;
    border-bottom: 0;
    background: #4e4e4e;
    font-weight: bold;
    line-height: 27px;
    text-align: center;
}
.irow.first {
    background: #45433f;
}
.insp-tabs {
    height: 28px;
    border-top: 0;
}
.insp-tabs .ptab {
    gap: 7px;
}
.insp-tabs .ptab:not(.on) {
    gap: 11px;
}
.insp-tabs .ptab + .ptab + .ptab {
    padding-left: 21px;
    gap: 10px;
}
.pnav {
    margin-left: auto;
    width: 40px;
    height: 26px;
    display: flex;
    align-items: center;
    justify-content: center;
    gap: 14px;
    background: #f4f4f4;
}

/* status bar */
.statusbar {
    flex: none;
    height: 26px;
    display: flex;
    align-items: center;
    padding-left: 4px;
    font-size: 15px;
    white-space: nowrap;
    color: #d2d2d2;
}
.statusbar span {
    flex: none;
}
.s-sel {
    width: 388px;
}
.s-start {
    width: 107px;
}
.s-len {
    width: 98px;
}
.s-size {
    width: 115px;
}
.s-enc {
    width: 91px;
}
.s-ansi {
    width: 44px;
}
.s-end {
    width: 58px;
}
.s-w {
    width: 23px;
}
.s-ovr {
    width: 42px;
}
.grip {
    flex: none;
}
```
